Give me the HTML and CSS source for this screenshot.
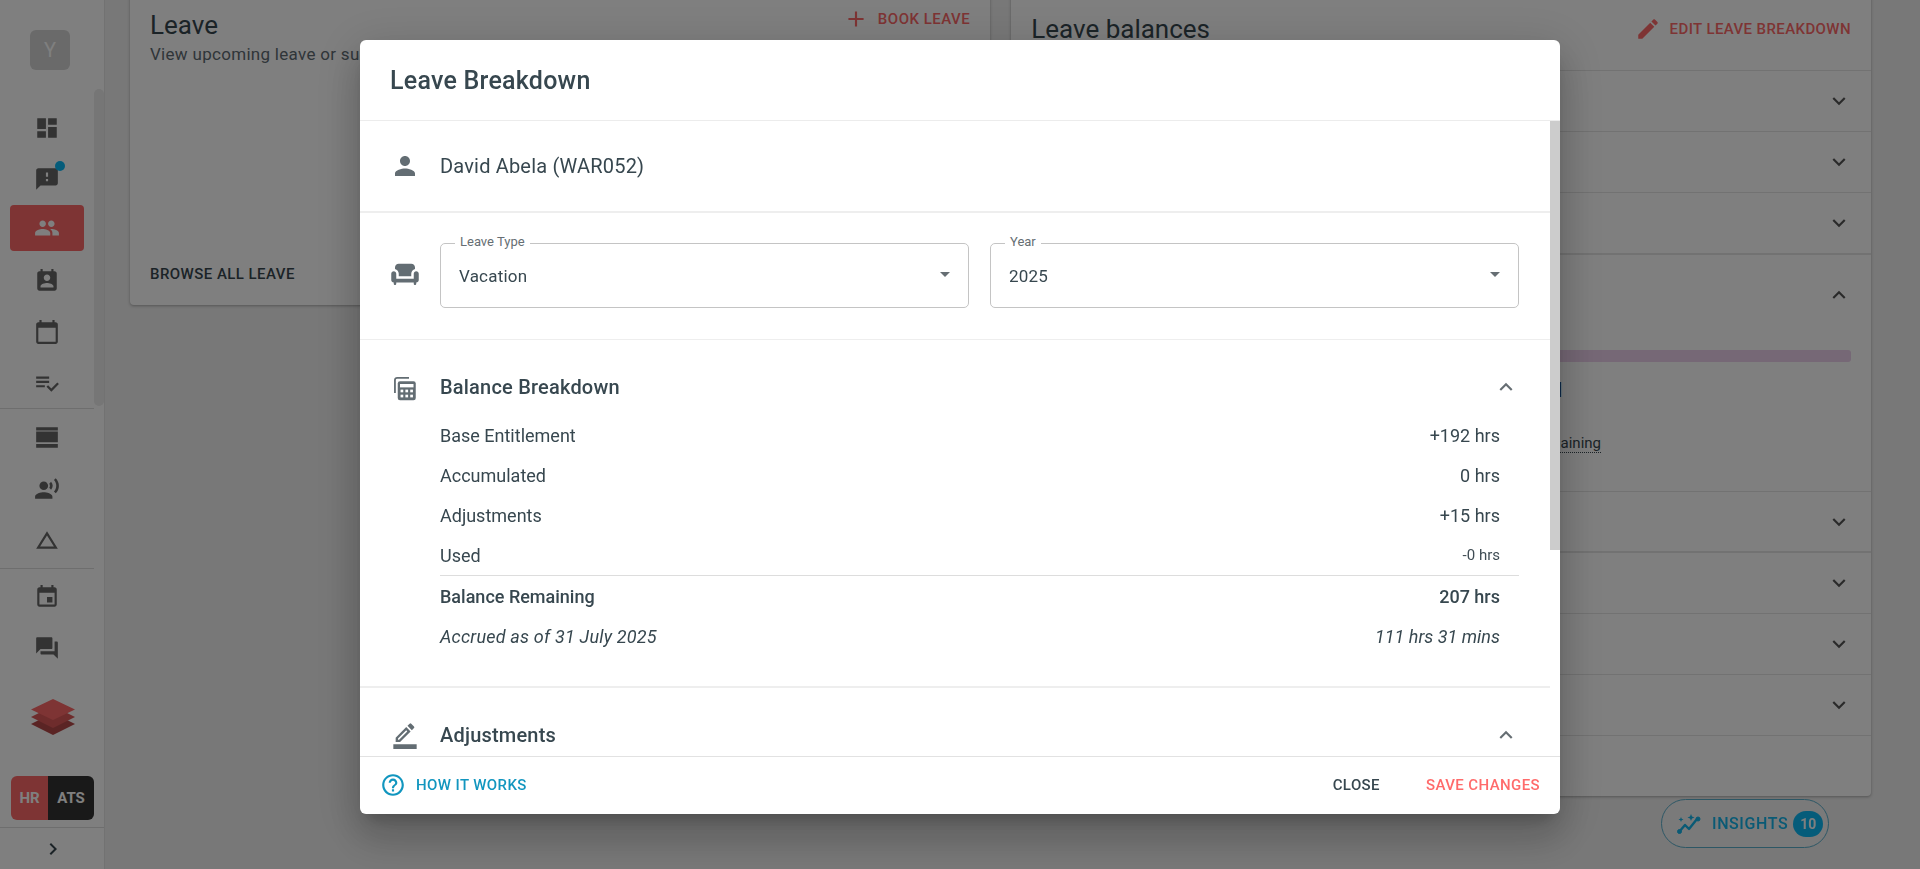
FILE: index.html
```html
<!DOCTYPE html>
<html>
<head>
<meta charset="utf-8">
<title>Leave Breakdown</title>
<link rel="stylesheet" href="styles.css">
</head>
<body>

<aside class="sidebar">
	<div class="side-top"><div class="avatar">Y</div></div>
	<div class="side-main">
		<nav class="side-nav">
			<a class="nav-item"><svg viewBox="0 0 24 24"><path d="M3 13h8V3H3v10zm0 8h8v-6H3v6zm10 0h8V11h-8v10zm0-18v6h8V3h-8z"/></svg></a>
			<a class="nav-item"><svg viewBox="0 0 24 24"><path d="M20 2H4c-1.1 0-1.99.9-1.99 2L2 22l4-4h14c1.1 0 2-.9 2-2V4c0-1.1-.9-2-2-2zm-7 12h-2v-2h2v2zm0-4h-2V6h2v4z"/></svg><span class="nav-dot"></span></a>
			<a class="nav-item active"><svg viewBox="0 0 24 24"><path d="M16 11c1.66 0 2.99-1.34 2.99-3S17.66 5 16 5c-1.66 0-3 1.34-3 3s1.34 3 3 3zm-8 0c1.66 0 2.99-1.34 2.99-3S9.66 5 8 5C6.34 5 5 6.34 5 8s1.34 3 3 3zm0 2c-2.33 0-7 1.17-7 3.5V19h14v-2.5c0-2.33-4.67-3.5-7-3.5zm8 0c-.29 0-.62.02-.97.05 1.16.84 1.97 1.97 1.97 3.45V19h6v-2.5c0-2.33-4.67-3.5-7-3.5z"/></svg></a>
			<a class="nav-item"><svg viewBox="0 0 24 24"><path d="M19 3h-1V1h-2v2H8V1H6v2H5c-1.11 0-2 .9-2 2v14c0 1.1.89 2 2 2h14c1.1 0 2-.9 2-2V5c0-1.1-.9-2-2-2zm-7 3c1.66 0 3 1.34 3 3s-1.34 3-3 3-3-1.34-3-3 1.34-3 3-3zm6 12H6v-1c0-2 4-3.1 6-3.1s6 1.1 6 3.1v1z"/></svg></a>
			<a class="nav-item"><svg viewBox="0 0 24 24"><path d="M20 3h-1V1h-2v2H7V1H5v2H4c-1.1 0-2 .9-2 2v16c0 1.1.9 2 2 2h16c1.1 0 2-.9 2-2V5c0-1.1-.9-2-2-2zm0 18H4V8h16v13z"/></svg></a>
			<a class="nav-item"><svg viewBox="0 0 24 24"><path d="M14 10H2v2h12v-2zm0-4H2v2h12V6zM2 16h8v-2H2v2zm19.5-4.5L23 13l-6.99 7-4.51-4.5L13 14l3.01 3 5.49-5.5z"/></svg></a>
			<div class="side-line line-one"></div>
			<a class="nav-item"><svg viewBox="0 0 24 24"><path d="M2 2h20v3H2zM2 6h20v10H2zM2 17.5h20V21H2z"/></svg></a>
			<a class="nav-item"><svg viewBox="0 0 24 24"><circle cx="9" cy="9" r="4"/><path d="M9 15c-2.67 0-8 1.34-8 4v2h16v-2c0-2.66-5.33-4-8-4zm6.76-9.64l-1.68 1.69c.84 1.18.84 2.71 0 3.89l1.68 1.69c2.02-2.02 2.02-5.07 0-7.27zM20.07 2l-1.63 1.63c2.77 3.02 2.77 7.56 0 10.74L20.07 16c3.9-3.89 3.91-9.95 0-14z"/></svg></a>
			<a class="nav-item"><svg viewBox="0 0 24 24"><path d="M12 7.77L18.39 18H5.61L12 7.77M12 4L2 20h20L12 4z"/></svg></a>
			<div class="side-line line-two"></div>
			<a class="nav-item"><svg viewBox="0 0 24 24"><path d="M17 12h-5v5h5v-5zM16 1v2H8V1H6v2H5c-1.11 0-1.99.9-1.99 2L3 19c0 1.1.89 2 2 2h14c1.1 0 2-.9 2-2V5c0-1.1-.9-2-2-2h-1V1h-2zm3 18H5V8h14v11z"/></svg></a>
			<a class="nav-item"><svg viewBox="0 0 24 24"><path d="M21 6h-2v9H6v2c0 .55.45 1 1 1h11l4 4V7c0-.55-.45-1-1-1zm-4 6V3c0-.55-.45-1-1-1H3c-.55 0-1 .45-1 1v14l4-4h10c.55 0 1-.45 1-1z"/></svg></a>
		</nav>
		<div class="side-track"><div class="side-thumb"></div></div>
	</div>
	<svg class="logo" viewBox="0 0 44 36">
		<polygon points="22,14 44,25 22,36 0,25" fill="#b44848"/>
		<polygon points="22,7 44,18 22,29 0,18" fill="#dc5858"/>
		<polygon points="22,0 44,10.5 22,21 0,10.5" fill="#fd6868"/>
	</svg>
	<div class="switch"><span class="switch-hr">HR</span><span class="switch-ats">ATS</span></div>
	<div class="side-foot"><svg viewBox="0 0 24 24"><path d="M8.59 16.59L13.17 12 8.59 7.41 10 6l6 6-6 6z"/></svg></div>
</aside>

<main class="page">
	<section class="card card-leave">
		<div class="card-head">
			<div>
				<h2 class="card-title">Leave</h2>
				<p class="card-sub">View upcoming leave or submit a new request</p>
			</div>
			<a class="link-red book"><svg viewBox="0 0 24 24"><path d="M19 13h-6v6h-2v-6H5v-2h6V5h2v6h6v2z"/></svg>BOOK LEAVE</a>
		</div>
		<a class="browse">BROWSE ALL LEAVE</a>
	</section>

	<section class="card card-bal">
		<div class="bal-head">
			<h2 class="card-title">Leave balances</h2>
			<a class="link-red edit"><svg viewBox="0 0 24 24"><path d="M3 17.25V21h3.75L17.81 9.94l-3.75-3.75L3 17.25zM20.71 7.04c.39-.39.39-1.02 0-1.41l-2.34-2.34c-.39-.39-1.02-.39-1.41 0l-1.83 1.83 3.75 3.75 1.83-1.83z"/></svg>EDIT LEAVE BREAKDOWN</a>
		</div>
		<div class="acc"><svg viewBox="0 0 24 24"><path d="M16.59 8.59L12 13.17 7.41 8.59 6 10l6 6 6-6z"/></svg></div>
		<div class="acc"><svg viewBox="0 0 24 24"><path d="M16.59 8.59L12 13.17 7.41 8.59 6 10l6 6 6-6z"/></svg></div>
		<div class="acc acc-before"><svg viewBox="0 0 24 24"><path d="M16.59 8.59L12 13.17 7.41 8.59 6 10l6 6 6-6z"/></svg></div>
		<div class="open">
			<div class="open-head"><svg viewBox="0 0 24 24"><path d="M12 8l-6 6 1.41 1.41L12 10.83l4.59 4.58L18 14z"/></svg></div>
			<div class="bar"></div>
			<div class="open-total">Total</div>
			<div class="open-remain"><span>Remaining</span></div>
		</div>
		<div class="acc acc-after"><svg viewBox="0 0 24 24"><path d="M16.59 8.59L12 13.17 7.41 8.59 6 10l6 6 6-6z"/></svg></div>
		<div class="acc"><svg viewBox="0 0 24 24"><path d="M16.59 8.59L12 13.17 7.41 8.59 6 10l6 6 6-6z"/></svg></div>
		<div class="acc"><svg viewBox="0 0 24 24"><path d="M16.59 8.59L12 13.17 7.41 8.59 6 10l6 6 6-6z"/></svg></div>
		<div class="acc"><svg viewBox="0 0 24 24"><path d="M16.59 8.59L12 13.17 7.41 8.59 6 10l6 6 6-6z"/></svg></div>
	</section>
</main>

<a class="insights">
	<svg viewBox="0 0 24 20"><path d="M2 18l6-7 4 4 8-10" fill="none" stroke-width="2.4" stroke-linecap="round" stroke-linejoin="round"/><circle cx="2.5" cy="17.5" r="2"/><circle cx="21" cy="5" r="2"/><path class="spark" d="M14 0l1 2.5 2.5 1-2.5 1-1 2.5-1-2.5-2.5-1 2.5-1zM4 3l.7 1.8 1.8.7-1.8.7L4 8l-.7-1.8-1.8-.7 1.8-.7z"/></svg>
	INSIGHTS<span class="insights-num">10</span>
</a>

<div class="overlay">
	<div class="modal">
		<div class="modal-head">Leave Breakdown</div>
		<div class="modal-body">
			<div class="modal-scroll">
				<div class="sec sec-person">
					<svg class="sec-icon" viewBox="0 0 24 24"><path d="M12 12c2.21 0 4-1.79 4-4s-1.79-4-4-4-4 1.79-4 4 1.79 4 4 4zm0 2c-2.67 0-8 1.34-8 4v2h16v-2c0-2.66-5.33-4-8-4z"/></svg>
					<span class="person">David Abela (WAR052)</span>
				</div>
				<div class="sec sec-fields">
					<svg class="sec-icon" viewBox="0 0 24 24"><path d="M7 11v2h10v-2c0-1.86 1.28-3.41 3-3.86V6c0-1.65-1.35-3-3-3H7C5.35 3 4 4.35 4 6v1.14c1.72.45 3 2 3 3.86zM21 9c-1.1 0-2 .9-2 2v4H5v-4c0-1.1-.9-2-2-2s-2 .9-2 2v5c0 1.1.9 2 2 2v1c0 .55.45 1 1 1s1-.45 1-1v-1h14v1c0 .55.45 1 1 1s1-.45 1-1v-1c1.1 0 2-.9 2-2v-5c0-1.1-.9-2-2-2z"/></svg>
					<div class="field"><label>Leave Type</label><span>Vacation</span><i class="arrow"></i></div>
					<div class="field"><label>Year</label><span>2025</span><i class="arrow"></i></div>
				</div>
				<div class="sec-block sec-balance">
					<div class="block-head">
						<svg class="sec-icon calc" viewBox="0 0 24 24"><path d="M3.5 16V4.5A2 2 0 0 1 5.5 2.5H16" fill="none" stroke="#636d73" stroke-width="1.6"/><rect x="6" y="5.5" width="16" height="17" rx="2"/><rect x="8" y="8" width="12" height="3" fill="#fff"/><g fill="#fff"><rect x="8.5" y="13" width="2.4" height="2.4"/><rect x="12.8" y="13" width="2.4" height="2.4"/><rect x="17.1" y="13" width="2.4" height="2.4"/><rect x="8.5" y="17.5" width="2.4" height="2.4"/><rect x="12.8" y="17.5" width="2.4" height="2.4"/><rect x="17.1" y="17.5" width="2.4" height="2.4"/></g></svg>
						<span class="block-title">Balance Breakdown</span>
						<svg class="chev" viewBox="0 0 24 24"><path d="M12 8l-6 6 1.41 1.41L12 10.83l4.59 4.58L18 14z"/></svg>
					</div>
					<div class="rows">
						<div class="row"><span>Base Entitlement</span><span>+192 hrs</span></div>
						<div class="row"><span>Accumulated</span><span>0 hrs</span></div>
						<div class="row"><span>Adjustments</span><span>+15 hrs</span></div>
						<div class="row row-used"><span>Used</span><small>-0 hrs</small></div>
						<div class="row row-total"><span>Balance Remaining</span><span>207 hrs</span></div>
						<div class="row row-note"><span class="note-label">Accrued as of 31 July 2025</span><span>111 hrs 31 mins</span></div>
					</div>
				</div>
				<div class="sec-block">
					<div class="block-head">
						<svg class="sec-icon adj" viewBox="0 0 24 24"><path d="M16.81 8.94l-3.75-3.75L4 14.25V18h3.75l9.06-9.06zM6 16v-.92l7.06-7.06.92.92L6.92 16H6zm13.71-9.96c.39-.39.39-1.02 0-1.41l-2.34-2.34a.996.996 0 00-1.41 0l-1.83 1.83 3.75 3.75 1.83-1.83zM2 20h20v4H2z"/></svg>
						<span class="block-title">Adjustments</span>
						<svg class="chev" viewBox="0 0 24 24"><path d="M12 8l-6 6 1.41 1.41L12 10.83l4.59 4.58L18 14z"/></svg>
					</div>
				</div>
			</div>
			<div class="scroll-track"><div class="scroll-thumb"></div></div>
		</div>
		<div class="modal-foot">
			<a class="how"><svg viewBox="0 0 24 24"><path d="M11 18h2v-2h-2v2zm1-16C6.48 2 2 6.48 2 12s4.48 10 10 10 10-4.48 10-10S17.52 2 12 2zm0 18c-4.41 0-8-3.59-8-8s3.59-8 8-8 8 3.59 8 8-3.59 8-8 8zm0-14c-2.21 0-4 1.79-4 4h2c0-1.1.9-2 2-2s2 .9 2 2c0 2-3 1.75-3 5h2c0-2.25 3-2.5 3-5 0-2.21-1.79-4-4-4z"/></svg>HOW IT WORKS</a>
			<a class="btn-close">CLOSE</a>
			<a class="btn-save">SAVE CHANGES</a>
		</div>
	</div>
</div>

</body>
</html>
```

FILE: styles.css
```css
*{ margin:0; padding:0; box-sizing:border-box;}
html,body{ height:100%; overflow:hidden;}
body{ display:flex; background:#f0f0f0; font-family:Roboto,"Liberation Sans",sans-serif; color:#37474f;}

/* sidebar */
.sidebar{ width:105px; height:869px; flex:none; display:flex; flex-direction:column; background:#fff; border-right:1px solid #e4e4e4;}
.side-top{ height:90px; padding:30px 0 0 30px;}
.avatar{ width:40px; height:40px; border-radius:6px; background:#d4d4d4; color:#fff; font-size:20px; display:flex; align-items:center; justify-content:center;}
.side-main{ display:flex;}
.side-nav{ width:95px; padding-top:13px;}
.nav-item{ display:flex; align-items:center; justify-content:center; position:relative; height:51px; margin:0 10px;}
.nav-item svg{ width:26px; height:26px; fill:#666;}
.nav-item.active{ height:46px; margin:1px 10px 4px; border-radius:4px; background:#fd6868;}
.nav-item.active svg{ fill:#fff;}
.nav-dot{ position:absolute; left:45px; top:8px; width:10px; height:10px; border-radius:50%; background:#0ab8f5;}
.side-line{ height:1px; background:#dcdcdc;}
.line-one{ margin:0 0 3px;}
.line-two{ margin:3px 0 2px;}
.side-track{ width:10px;}
.side-thumb{ height:317px; border-radius:5px; background:#ececec;}
.logo{ width:44px; height:36px; margin:26px 0 0 31px; flex:none;}
.switch{ display:flex; width:83px; height:44px; margin:41px 0 0 11px; border-radius:6px; overflow:hidden; font-size:15px; font-weight:700; color:#fff; line-height:44px; text-align:center; flex:none;}
.switch-hr{ width:37px; background:#fd6868;}
.switch-ats{ width:46px; background:#333;}
.side-foot{ margin-top:7px; border-top:1px solid #dcdcdc; height:42px; flex:none; display:flex; align-items:center; justify-content:center; padding-left:2px;}
.side-foot svg{ width:24px; height:24px; fill:#37474f;}

/* page behind the dialog */
.page{ flex:1; display:flex; gap:21px; align-items:flex-start; padding:0 49px 0 25px; margin-top:-10px;}
.card{ flex:1 1 50%; background:#fff; border-radius:4px; box-shadow:0 1px 3px rgba(0,0,0,.3);}
.card-leave{ height:315px; display:flex; flex-direction:column; padding:15px 20px 20px 20px;}
.card-bal{ height:806px;}
.card-head{ display:flex; justify-content:space-between; align-items:flex-start;}
.card-title{ font-size:26px; font-weight:400; line-height:36px;}
.card-leave .card-title{ margin-top:2px;}
.card-sub{ font-size:17px; color:#5f6b73; line-height:22px; letter-spacing:.3px;}
.link-red{ display:flex; align-items:center; gap:9px; color:#fd6868; font-size:15px; font-weight:500; letter-spacing:.5px; white-space:nowrap;}
.link-red svg{ width:26px; height:26px; fill:#fd6868;}
.book{ margin-top:1px;}
.edit{ letter-spacing:.4px;}
.browse{ margin-top:auto; font-size:15px; font-weight:500; letter-spacing:.45px; line-height:22px;}
.bal-head{ height:81px; padding:0 20px 2px 20px; display:flex; justify-content:space-between; align-items:center; border-bottom:1px solid #e4e4e4;}
.acc{ height:61px; padding-right:19px; display:flex; align-items:center; justify-content:flex-end; border-bottom:1px solid #e4e4e4;}
.acc svg,.open-head svg{ width:26px; height:26px; fill:#555;}
.acc-before{ border-bottom-width:2px; height:62px;}
.acc-after{ border-bottom-width:2px;}
.open{ height:237px; border-bottom:1px solid #e4e4e4;}
.open-head{ height:80px; padding:0 19px 0 0; display:flex; align-items:center; justify-content:flex-end;}
.bar{ height:12px; margin:15px 20px 0 20px; border-radius:3px; background:#ecd0ec;}
.open-total{ margin-top:15px; padding-right:309px; text-align:right; font-size:20px; font-weight:700; line-height:26px; color:#1a2a33;}
.open-remain{ margin-top:31px; padding-right:270px; text-align:right; font-size:15px; line-height:18px;}
.open-remain span{ border-bottom:1px dotted #37474f;}

.insights{ position:fixed; left:1661px; top:799px; width:168px; height:49px; display:flex; align-items:center; padding-left:15px; border:1px solid #5aaecb; border-radius:25px; background:#f4f4f4; color:#14b4ea; font-size:16px; font-weight:500; letter-spacing:.6px;}
.insights svg{ width:24px; height:20px; margin-right:11px; stroke:#14b4ea; fill:#14b4ea;}
.insights .spark{ stroke:none;}
.insights-num{ width:30px; height:26px; margin-left:5px; border-radius:13px; background:#0ab8f5; color:#fff; font-size:14px; font-weight:700; text-align:center; line-height:26px; letter-spacing:0;}

/* dialog */
.overlay{ position:fixed; left:0; top:0; width:100%; height:100%; background:rgba(0,0,0,.5); display:flex; justify-content:center; align-items:flex-start; padding-top:40px;}
.modal{ width:1200px; height:774px; display:flex; flex-direction:column; background:#fff; border-radius:6px; overflow:hidden; box-shadow:0 11px 15px -7px rgba(0,0,0,.2),0 24px 38px 3px rgba(0,0,0,.14),0 9px 46px 8px rgba(0,0,0,.12);}
.modal-head{ height:81px; flex:none; padding-left:30px; border-bottom:1px solid #ececec; font-size:25px; font-weight:500; letter-spacing:.25px; line-height:82px;}
.modal-body{ flex:1; min-height:0; display:flex;}
.modal-scroll{ flex:1; min-width:0; overflow:hidden;}
.scroll-track{ width:10px; flex:none;}
.scroll-thumb{ height:429px; background:#ccc;}

.sec{ display:flex; align-items:center; padding:0 31px 0 30px;}
.sec-icon{ width:30px; height:30px; flex:none; fill:#636d73; margin-right:20px;}
.sec-person{ height:92px; border-bottom:2px solid #eee;}
.person{ font-size:20px; letter-spacing:.18px;}
.sec-fields{ height:127px; padding-bottom:2px; border-bottom:1px solid #eee;}
.field{ flex:1; height:65px; position:relative; display:flex; align-items:center; justify-content:space-between; padding:0 18px; border:1px solid #c4c4c4; border-radius:5px; font-size:17px; letter-spacing:.2px;}
.field span{ margin-top:2px;}
.field + .field{ margin-left:21px;}
.field label{ position:absolute; left:14px; top:-10px; padding:0 5px; background:#fff; color:#666e73; font-size:13px; line-height:16px; letter-spacing:0;}
.arrow{ width:0; height:0; margin-top:-1px; border-left:5px solid transparent; border-right:5px solid transparent; border-top:5px solid #666e73;}

.sec-block{ padding:27px 31px 0 30px;}
.sec-balance{ height:348px; border-bottom:2px solid #eee;}
.block-head{ height:40px; display:flex; align-items:center;}
.block-title{ flex:1; font-size:20px; font-weight:500; letter-spacing:.2px;}
.calc{ width:27px; height:27px; margin:2px 22.5px 0 .5px;}
.adj{ width:28px; height:28px; margin:0 21px 0 1px;}
.chev{ width:26px; height:26px; fill:#666e73;}

.rows{ margin:8px 0 0 50px;}
.row{ display:flex; justify-content:space-between; align-items:center; height:40px; padding-right:19px; font-size:18px;}
.row small{ font-size:15px; color:#3f4c54;}
.row-used{ height:41px; border-bottom:1px solid #ddd;}
.row-total{ font-weight:500;}
.row-note{ font-style:italic;}
.note-label{ letter-spacing:.2px;}

.modal-foot{ height:58px; flex:none; display:flex; align-items:center; padding:0 20px 2px; border-top:1px solid #e2e2e2; font-size:15px; font-weight:500; letter-spacing:.4px;}
.how{ display:flex; align-items:center; gap:10px; margin-right:auto; color:#1296bf;}
.how svg{ width:26px; height:26px; fill:#1296bf;}
.btn-close{ margin-right:46px;}
.btn-save{ color:#ff6b6b;}
```
